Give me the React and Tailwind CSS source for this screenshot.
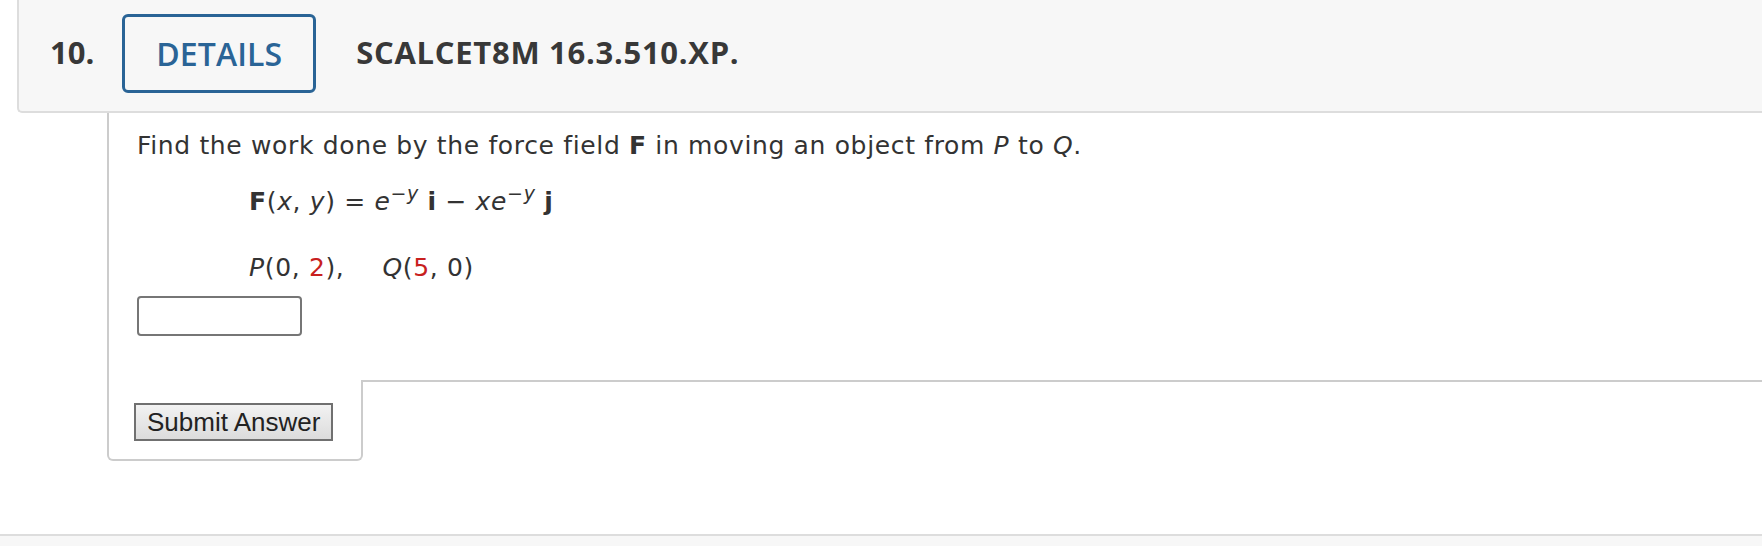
export default function App() {
  return (
    <div className="w-[1762px] h-[546px] overflow-hidden bg-white text-[#333]">
      {/* question header */}
      <div className="ml-[17px] h-[113px] bg-[#f7f7f7] border-l-2 border-b-2 border-[#ddd] rounded-bl-[5px] flex items-start pt-[14px] pl-[31px] font-['Open_Sans',sans-serif]">
        <span className="mt-[18px] text-[31px] font-bold leading-[40px] text-[#383838]">10.</span>
        <div className="ml-[28px] w-[194px] h-[79px] border-[3px] border-[#2a6496] rounded-[6px] flex items-center justify-center">
          <span className="text-[32px] font-semibold tracking-[0.1px] leading-[40px] text-[#2a6496]">DETAILS</span>
        </div>
        <span className="ml-[40px] mt-[18px] text-[31px] font-bold tracking-[0.7px] leading-[40px] text-[#383838]">SCALCET8M 16.3.510.XP.</span>
      </div>

      {/* question body */}
      <div className="ml-[107px] font-['DejaVu_Sans',Verdana,sans-serif] text-[25px] tracking-[0.65px]">
        <div className="border-l-2 border-[#ccc] pl-[28px] pt-[19px] pb-[44px]">
          <p className="leading-[28px]">
            Find the work done by the force field <b>F</b> in moving an object from <i>P</i> to <i>Q</i>.
          </p>
          <div className="pl-[112px] mt-[28px] leading-[28px] whitespace-nowrap">
            <b>F</b>(<i>x</i>, <i>y</i>) = <i>e</i>
            <span className="relative -top-[10px] text-[19px]">−<i>y</i></span>{' '}
            <b>i</b> − <i>x</i><i>e</i>
            <span className="relative -top-[10px] text-[19px]">−<i>y</i></span>{' '}
            <b>j</b>
          </div>
          <div className="pl-[112px] mt-[37px] leading-[28px] whitespace-nowrap">
            <i>P</i>(0, <span className="text-[#c8201e]">2</span>),
            <span className="inline-block w-[38px]"></span>
            <i>Q</i>(<span className="text-[#c8201e]">5</span>, 0)
          </div>
          <input
            type="text"
            className="block mt-[14px] w-[165px] h-[40px] border-2 border-[#767676] rounded-[4px] bg-white"
          />
        </div>
        <div className="flex">
          <div className="w-[256px] h-[81px] border-l-2 border-r-2 border-b-2 border-[#ccc] rounded-b-[6px] pl-[25px] pt-[23px]">
            <button className="h-[38px] px-[11px] border-2 border-[#707070] bg-gradient-to-b from-[#f2f2f2] to-[#dcdcdc] font-['Liberation_Sans',Arial,sans-serif] text-[26px] tracking-normal leading-[30px] text-[#222]">
              Submit Answer
            </button>
          </div>
          <div className="flex-1 -ml-[2px] border-t-2 border-l-2 border-[#ccc] rounded-tl-[3px] h-[2px]"></div>
        </div>
      </div>

      {/* next question header */}
      <div className="mt-[73px] h-[20px] border-t-2 border-[#ddd] bg-[#f7f7f7]"></div>
    </div>
  );
}
